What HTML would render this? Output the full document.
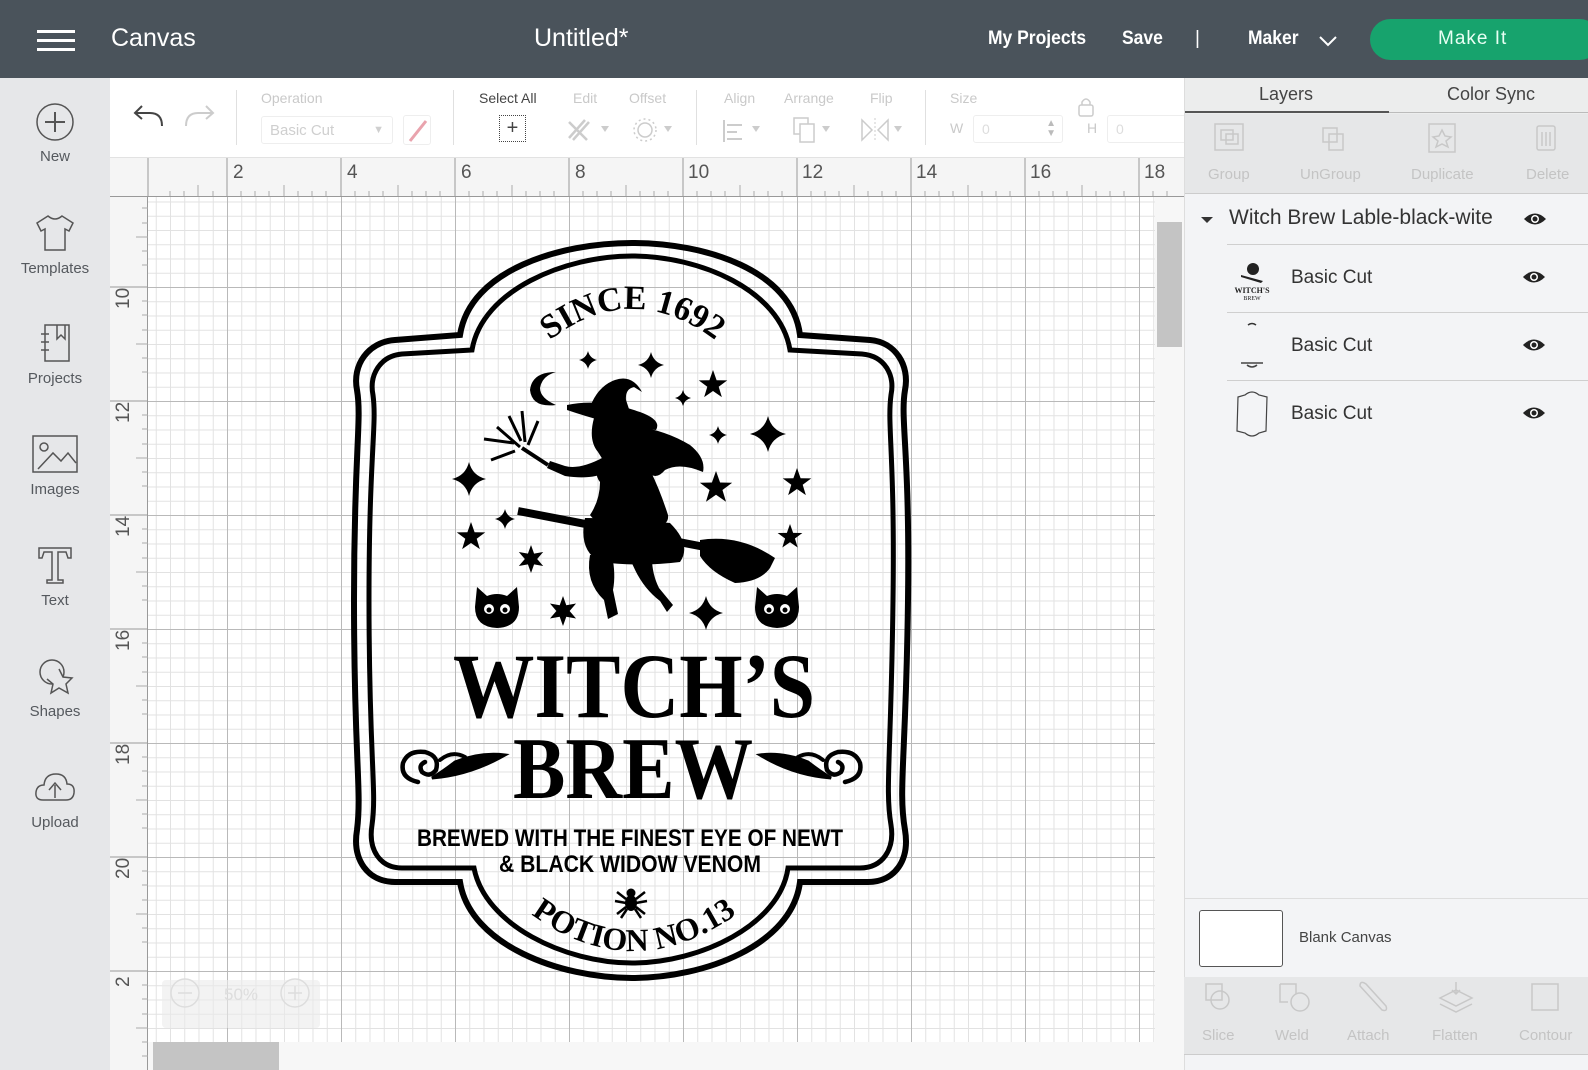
<!DOCTYPE html>
<html><head><meta charset="utf-8">
<style>
*{margin:0;padding:0;box-sizing:border-box}
body{width:1588px;height:1070px;overflow:hidden;position:relative;font-family:"Liberation Sans",sans-serif;background:#fff}
.abs{position:absolute}
#top{left:0;top:0;width:1588px;height:78px;background:#4a535b;color:#fff}
#side{left:0;top:78px;width:110px;height:992px;background:#e6e7e9}
.si{position:absolute;left:0;width:110px;text-align:center;color:#55595e;font-size:15px}
.si svg{display:block;margin:0 auto 6px}
#tb{left:110px;top:78px;width:1074px;height:80px;background:#fff;border-bottom:1px solid #e2e2e2}
.lab{position:absolute;font-size:14px;color:#c9c9c9}
#hr{left:110px;top:158px;width:1074px;height:39px;background:#f5f5f5}
#vr{left:110px;top:197px;width:38px;height:873px;background:#f5f5f5}
#grid{left:148px;top:197px;width:1007px;height:845px;background-color:#fff;
background-image:
linear-gradient(90deg,#b9b9b9 1px,transparent 1px),
linear-gradient(#b9b9b9 1px,transparent 1px),
linear-gradient(90deg,#e2e2e2 1px,transparent 1px),
linear-gradient(#e2e2e2 1px,transparent 1px);
background-size:114px 114px,114px 114px,14.25px 14.25px,14.25px 14.25px;
background-position:79px 0,0 90px,79px 0,0 90px}
#rp{left:1184px;top:78px;width:404px;height:992px;background:#f3f4f6;border-left:1px solid #ddd}
.lrow{position:absolute;left:1227px;width:361px;height:68px;border-top:1px solid #cfcfcf}
.lrow span{position:absolute;left:64px;top:22px;font-size:19px;color:#333}
.eye{position:absolute;left:295px;top:24px}
.bt{position:absolute;font-size:15px;color:#c4c4c4;text-align:center}
</style></head><body>

<div id="top" class="abs">
 <div class="abs" style="left:37px;top:30px;width:38px;height:3px;background:#fff;box-shadow:0 9px 0 #fff,0 18px 0 #fff"></div>
 <div class="abs" style="left:111px;top:24px;font-size:25px">Canvas</div>
 <div class="abs" style="left:534px;top:24px;font-size:25px">Untitled*</div>
 <div class="abs" style="left:988px;top:28px;font-size:19px;font-weight:bold;transform:scaleX(.92);transform-origin:left">My Projects</div>
 <div class="abs" style="left:1122px;top:28px;font-size:19px;font-weight:bold;transform:scaleX(.92);transform-origin:left">Save</div>
 <div class="abs" style="left:1195px;top:28px;font-size:19px">|</div>
 <div class="abs" style="left:1248px;top:28px;font-size:19px;font-weight:bold;transform:scaleX(.92);transform-origin:left">Maker</div>
 <svg class="abs" style="left:1318px;top:34px" width="20" height="14"><path d="M2 3 L10 11 L18 3" stroke="#fff" stroke-width="2" fill="none"/></svg>
 <div class="abs" style="left:1370px;top:19px;width:230px;height:41px;border-radius:21px;background:#17a36d;color:#e8fff4;font-size:19px;padding:9px 0 0 68px;letter-spacing:1px">Make It</div>
</div>

<div id="side" class="abs">
 <div class="si" style="top:24px"><svg width="40" height="40"><circle cx="20" cy="20" r="18" stroke="#555" stroke-width="1.5" fill="none"/><path d="M20 10V30M10 20H30" stroke="#555" stroke-width="2"/></svg>New</div>
 <div class="si" style="top:134px"><svg width="44" height="42"><path d="M15 4 L4 11 L8 19 L12 17 L12 38 L32 38 L32 17 L36 19 L40 11 L29 4 Q22 10 15 4Z" stroke="#555" stroke-width="1.5" fill="none"/></svg>Templates</div>
 <div class="si" style="top:244px"><svg width="40" height="42"><rect x="10" y="3" width="24" height="36" stroke="#555" stroke-width="1.5" fill="none"/><path d="M22 3V17L26 13L30 17V3M6 12H14M6 20H14M6 28H14" stroke="#555" stroke-width="1.5" fill="none"/></svg>Projects</div>
 <div class="si" style="top:355px"><svg width="48" height="42"><rect x="2" y="3" width="44" height="36" stroke="#555" stroke-width="1.5" fill="none"/><circle cx="13" cy="14" r="4" stroke="#555" stroke-width="1.5" fill="none"/><path d="M7 36L22 20L30 28L37 20L45 30" stroke="#555" stroke-width="1.5" fill="none"/></svg>Images</div>
 <div class="si" style="top:466px"><svg width="40" height="42"><path d="M4 4H36V14L33 14L31 8H23V36H28V39H12V36H17V8H9L7 14L4 14Z" stroke="#555" stroke-width="1.5" fill="none"/></svg>Text</div>
 <div class="si" style="top:577px"><svg width="40" height="42"><circle cx="17" cy="17" r="12" stroke="#555" stroke-width="1.5" fill="none"/><path d="M24 14L28 22L37 23L31 29L33 38L24 33L16 38L18 29L12 24" stroke="#555" stroke-width="1.5" fill="#e6e7e9"/></svg>Shapes</div>
 <div class="si" style="top:688px"><svg width="44" height="42"><path d="M10 34Q2 34 3 26Q4 19 11 19Q12 8 23 8Q33 8 34 18Q42 18 41 27Q40 34 33 34Z" stroke="#555" stroke-width="1.5" fill="none"/><path d="M22 32V19M16 24L22 17L28 24" stroke="#555" stroke-width="1.5" fill="none"/></svg>Upload</div>
</div>

<div id="tb" class="abs">
 <svg class="abs" style="left:22px;top:24px" width="36" height="28"><path d="M10 4L3 11L10 17M3 11H18Q30 11 30 24" stroke="#444" stroke-width="2" fill="none"/></svg>
 <svg class="abs" style="left:72px;top:24px" width="36" height="28"><path d="M24 4L31 11L24 17M31 11H16Q4 11 4 24" stroke="#ccc" stroke-width="2" fill="none"/></svg>
 <div class="abs" style="left:126px;top:12px;width:1px;height:55px;background:#e0e0e0"></div>
 <div class="lab" style="left:151px;top:12px">Operation</div>
 <div class="abs" style="left:151px;top:38px;width:132px;height:28px;border:1px solid #eee;border-radius:3px;font-size:15px;color:#cfcfcf;padding:5px 0 0 8px">Basic Cut<span style="position:absolute;right:8px;font-size:11px;top:7px">▼</span></div>
 <div class="abs" style="left:293px;top:37px;width:28px;height:30px;border:1px solid #eee;border-radius:3px"><svg width="28" height="30"><path d="M6 25L22 5" stroke="#e9a3ad" stroke-width="3"/></svg></div>
 <div class="abs" style="left:343px;top:12px;width:1px;height:55px;background:#e0e0e0"></div>
 <div class="lab" style="left:369px;top:12px;color:#444">Select All</div>
 <div class="abs" style="left:389px;top:37px;width:27px;height:27px;border:1.5px dotted #444;text-align:center;font-size:20px;line-height:24px;color:#444">+</div>
 <div class="lab" style="left:463px;top:12px">Edit</div>
 <svg class="abs" style="left:455px;top:38px" width="46" height="28"><path d="M4 22L20 4M8 24L24 6M4 6L22 24" stroke="#ccc" stroke-width="2.5" fill="none"/><path d="M36 10L40 16L44 10Z" fill="#ccc"/></svg>
 <div class="lab" style="left:519px;top:12px">Offset</div>
 <svg class="abs" style="left:522px;top:38px" width="46" height="28"><circle cx="13" cy="14" r="7" stroke="#ccc" stroke-width="1.5" fill="none"/><circle cx="13" cy="14" r="11" stroke="#ccc" stroke-width="1.5" stroke-dasharray="2 3" fill="none"/><path d="M32 10L36 16L40 10Z" fill="#ccc"/></svg>
 <div class="abs" style="left:586px;top:12px;width:1px;height:55px;background:#e0e0e0"></div>
 <div class="lab" style="left:614px;top:12px">Align</div>
 <svg class="abs" style="left:612px;top:40px" width="42" height="26"><path d="M2 2V24M5 7H20M5 14H15M5 21H20" stroke="#ccc" stroke-width="2"/><path d="M30 8L34 14L38 8Z" fill="#ccc"/></svg>
 <div class="lab" style="left:674px;top:12px">Arrange</div>
 <svg class="abs" style="left:680px;top:36px" width="46" height="32"><rect x="4" y="4" width="14" height="16" stroke="#ccc" stroke-width="1.5" fill="none"/><rect x="10" y="10" width="14" height="18" stroke="#ccc" stroke-width="1.5" fill="#fff"/><path d="M32 12L36 18L40 12Z" fill="#ccc"/></svg>
 <div class="lab" style="left:760px;top:12px">Flip</div>
 <svg class="abs" style="left:750px;top:38px" width="46" height="28"><path d="M2 4V24L12 14ZM28 4V24L18 14Z" stroke="#ccc" stroke-width="1.5" fill="none"/><path d="M15 2V26" stroke="#ccc" stroke-dasharray="2 2"/><path d="M34 10L38 16L42 10Z" fill="#ccc"/></svg>
 <div class="abs" style="left:815px;top:12px;width:1px;height:55px;background:#e0e0e0"></div>
 <div class="lab" style="left:840px;top:12px">Size</div>
 <div class="lab" style="left:840px;top:42px">W</div>
 <div class="abs" style="left:863px;top:37px;width:90px;height:28px;border:1px solid #eee;border-radius:3px;font-size:14px;color:#ddd;padding:5px 8px">0<span style="position:absolute;right:6px;top:3px;font-size:10px;line-height:10px;color:#bbb">▲<br>▼</span></div>
 <svg class="abs" style="left:966px;top:18px" width="20" height="22"><rect x="3" y="9" width="14" height="11" rx="2" stroke="#ccc" stroke-width="1.5" fill="none"/><path d="M6 9V6Q10 0 14 6V9" stroke="#ccc" stroke-width="1.5" fill="none"/></svg>
 <div class="lab" style="left:977px;top:42px">H</div>
 <div class="abs" style="left:997px;top:37px;width:80px;height:28px;border:1px solid #eee;border-radius:3px;font-size:14px;color:#ddd;padding:5px 8px">0</div>
</div>

<div id="hr" class="abs">
<svg width="1074" height="39" style="position:absolute;left:0;top:0">
<g stroke="#999" stroke-width="1">
<path d="M38 39V0"/>
<path d="M117 39V0M231 39V0M345 39V0M459 39V0M573 39V0M687 39V0M801 39V0M915 39V0M1029 39V0"/>
</g>
<g stroke="#aaa">
<path d="M60 39V33M74 39V33M88 39V27M103 39V33M131 39V33M145 39V33M159 39V33M174 39V27M188 39V33M202 39V33M216 39V33M245 39V33M259 39V33M273 39V33M288 39V27M302 39V33M316 39V33M330 39V33M359 39V33M373 39V33M387 39V33M402 39V27M416 39V33M430 39V33M444 39V33M473 39V33M487 39V33M501 39V33M516 39V27M530 39V33M544 39V33M558 39V33M587 39V33M601 39V33M615 39V33M630 39V27M644 39V33M658 39V33M672 39V33M701 39V33M715 39V33M729 39V33M744 39V27M758 39V33M772 39V33M786 39V33M815 39V33M829 39V33M843 39V33M858 39V27M872 39V33M886 39V33M900 39V33M929 39V33M943 39V33M957 39V33M972 39V27M986 39V33M1000 39V33M1014 39V33M1043 39V33M1057 39V33"/>
</g>
<g font-family="Liberation Sans" font-size="19" fill="#555">
<text x="123" y="20">2</text><text x="237" y="20">4</text><text x="351" y="20">6</text><text x="465" y="20">8</text><text x="578" y="20">10</text><text x="692" y="20">12</text><text x="806" y="20">14</text><text x="920" y="20">16</text><text x="1034" y="20">18</text>
</g>
<path d="M0 38.5H1074" stroke="#999"/>
</svg>
</div>
<div id="vr" class="abs">
<svg width="38" height="873" style="position:absolute;left:0;top:0">
<path d="M37.5 0V873" stroke="#999"/>
<g stroke="#999"><path d="M0 90H38M0 204H38M0 318H38M0 432H38M0 546H38M0 660H38M0 774H38"/></g>
<g stroke="#aaa"><path d="M32 11H38M32 26H38M26 40H38M32 54H38M32 68H38M32 104H38M32 118H38M32 133H38M26 147H38M32 161H38M32 175H38M32 218H38M32 232H38M32 247H38M26 261H38M32 275H38M32 289H38M32 332H38M32 346H38M32 361H38M26 375H38M32 389H38M32 403H38M32 446H38M32 460H38M32 475H38M26 489H38M32 503H38M32 517H38M32 560H38M32 574H38M32 589H38M26 603H38M32 617H38M32 631H38M32 674H38M32 688H38M32 703H38M26 717H38M32 731H38M32 745H38M32 788H38M32 802H38M32 817H38M26 831H38M32 845H38M32 859H38"/></g>
<g font-family="Liberation Sans" font-size="19" fill="#555">
<text transform="translate(19,112) rotate(-90)">10</text><text transform="translate(19,226) rotate(-90)">12</text><text transform="translate(19,340) rotate(-90)">14</text><text transform="translate(19,454) rotate(-90)">16</text><text transform="translate(19,568) rotate(-90)">18</text><text transform="translate(19,682) rotate(-90)">20</text><text transform="translate(19,790) rotate(-90)">2</text>
</g>
</svg>
</div>

<div id="grid" class="abs"></div>
<div class="abs" style="left:1155px;top:197px;width:29px;height:873px;background:#f7f7f7"></div>
<div class="abs" style="left:1157px;top:222px;width:25px;height:125px;background:#c4c4c4"></div>
<div class="abs" style="left:148px;top:1042px;width:1007px;height:28px;background:#f7f7f7"></div>
<div class="abs" style="left:153px;top:1042px;width:126px;height:28px;background:#c4c4c4"></div>
<div class="abs" style="left:162px;top:980px;width:158px;height:48px;background:rgba(235,235,235,.6);border-radius:4px"></div>
<svg class="abs" style="left:168px;top:978px" width="150" height="32"><circle cx="17" cy="15" r="14" stroke="#ddd" stroke-width="1.5" fill="none"/><path d="M10 15H24" stroke="#ddd" stroke-width="1.5"/><circle cx="127" cy="15" r="14" stroke="#ddd" stroke-width="1.5" fill="none"/><path d="M120 15H134M127 8V22" stroke="#ddd" stroke-width="1.5"/><text x="56" y="22" font-family="Liberation Sans" font-size="17" fill="#ddd">50%</text></svg>

<svg class="abs" style="left:0;top:0" width="1155" height="1042" viewBox="0 0 1155 1042">
<defs>
<path id="s4" d="M0,-10 Q2,-2 10,0 Q2,2 0,10 Q-2,2 -10,0 Q-2,-2 0,-10Z"/>
<polygon id="s5" points="0,-10 2.4,-3.2 9.5,-3.1 3.8,1.2 5.9,8.1 0,4 -5.9,8.1 -3.8,1.2 -9.5,-3.1 -2.4,-3.2"/>
<polygon id="s6" points="0,-10 2.2,-3.8 8.7,-5 4.4,0 8.7,5 2.2,3.8 0,10 -2.2,3.8 -8.7,5 -4.4,0 -8.7,-5 -2.2,-3.8"/>
<g id="cat"><path d="M-20,-20 L-10,-11 Q0,-15 10,-11 L20,-20 L22,0 Q22,20 0,21 Q-22,20 -22,0Z" fill="#000"/><circle cx="-8" cy="2" r="5" fill="#fff"/><circle cx="8" cy="2" r="5" fill="#fff"/><circle cx="-8" cy="3" r="2.5" fill="#000"/><circle cx="8" cy="3" r="2.5" fill="#000"/></g>
<path id="arcTop" d="M540,348 Q632,270 725,348"/>
<path id="arcBot" d="M528,912 Q632,990 740,912"/>
</defs>
<path d="M460,335 C470,270 560,243 632,243 C705,243 792,270 800,335 L870,340 C895,342 910,365 905,390 C900,420 910,450 908,600 C906,760 898,790 905,830 C910,860 895,882 868,882 L800,882 C792,945 705,978 632,978 C560,978 470,945 460,882 L395,882 C368,882 352,860 357,830 C362,790 354,760 354,600 C354,450 362,420 357,390 C352,365 368,342 395,340 Z" stroke="#000" stroke-width="6" fill="none"/>
<path d="M472,350 C482,290 565,256 632,256 C700,256 780,290 790,350 L862,354 C885,356 895,375 891,395 C887,425 895,455 893,600 C891,760 885,790 891,825 C895,850 882,868 860,868 L788,868 C780,925 700,963 632,963 C565,963 485,925 474,868 L402,868 C380,868 368,850 372,825 C377,790 369,760 369,600 C369,455 377,425 373,395 C369,375 380,356 402,354 Z" stroke="#000" stroke-width="5" fill="none"/>
<text font-family="Liberation Serif" font-weight="bold" font-size="34" fill="#000"><textPath href="#arcTop" startOffset="50%" text-anchor="middle">SINCE 1692</textPath></text>
<text font-family="Liberation Serif" font-weight="bold" font-size="32" fill="#000"><textPath href="#arcBot" startOffset="50%" text-anchor="middle">POTION NO.13</textPath></text>
<g transform="translate(631,903)"><ellipse rx="6" ry="8" fill="#000"/><circle cy="-10" r="4.5" fill="#000"/><path d="M-5,-4 L-14,-11 M-5,0 L-16,-2 M-5,4 L-14,11 M-4,6 L-10,15 M5,-4 L14,-11 M5,0 L16,-2 M5,4 L14,11 M4,6 L10,15" stroke="#000" stroke-width="2.5"/></g>
<g fill="#000">
<use href="#s4" transform="translate(588,360) scale(.9)"/>
<use href="#s4" transform="translate(651,365) scale(1.3)"/>
<use href="#s5" transform="translate(713,385) scale(1.5)"/>
<use href="#s4" transform="translate(683,398) scale(.8)"/>
<use href="#s4" transform="translate(718,435) scale(.9)"/>
<use href="#s4" transform="translate(768,434) scale(1.8)"/>
<use href="#s4" transform="translate(469,479) scale(1.7)"/>
<use href="#s5" transform="translate(716,488) scale(1.7)"/>
<use href="#s5" transform="translate(797,483) scale(1.5)"/>
<use href="#s4" transform="translate(505,519) scale(1)"/>
<use href="#s5" transform="translate(471,537) scale(1.5)"/>
<use href="#s5" transform="translate(790,537) scale(1.3)"/>
<use href="#s6" transform="translate(531,559) scale(1.4)"/>
<use href="#s6" transform="translate(563,611) scale(1.5)"/>
<use href="#s4" transform="translate(706,613) scale(1.7)"/>
<use href="#cat" transform="translate(497,607)"/>
<use href="#cat" transform="translate(777,607)"/>
<path d="M556,372 Q532,372 530,390 Q532,408 556,405 Q540,398 540,388 Q542,376 556,372Z"/>
<!-- witch -->
<path d="M567,405 Q600,398 640,412 Q662,420 656,430 Q620,428 567,410Z"/>
<path d="M590,407 Q598,386 615,380 Q632,374 642,392 L634,387 Q625,389 626,400 L632,418Z"/>
<path d="M594,418 Q588,440 598,452 L603,460 Q592,472 600,482 Q600,500 590,515 Q600,530 640,525 Q670,530 668,515 Q660,490 650,470 Q640,450 632,430 Q620,418 594,418Z"/>
<path d="M625,425 Q662,428 690,445 Q706,458 703,472 Q680,462 665,470 Q655,482 646,470Z"/>
<path d="M604,457 Q580,470 565,466 L550,461 L547,468 L565,476 Q592,480 607,472Z"/>
<path d="M585,518 Q620,518 670,523 Q692,545 680,562 Q640,567 600,562 Q578,550 585,518Z"/>
<path d="M518,511 L710,548" stroke="#000" stroke-width="8"/>
<path d="M700,540 Q740,534 775,558 L770,568 Q760,582 735,583 Q710,572 700,556Z"/>
<path d="M590,555 Q585,582 604,600 L608,619 L618,614 L613,590 Q616,574 612,556Z"/>
<path d="M630,558 Q640,586 660,601 L667,612 L673,605 L659,588 Q652,574 652,558Z"/>
<path d="M548,465 L522,448" stroke="#000" stroke-width="4"/>
<path d="M520,447 L497,427 M514,443 L484,439 M515,451 L491,460 M521,441 L509,416 M525,442 L522,411 M528,445 L538,421" stroke="#000" stroke-width="3"/>
</g>
<g stroke="#000" fill="none" stroke-linecap="round">
<path d="M418,782 Q400,778 403,763 Q408,750 425,752 Q440,756 436,770 Q430,778 422,772 Q418,765 425,762" stroke-width="4.5"/>
<path d="M440,760 Q452,750 465,757 Q470,766 460,770" stroke-width="4"/>
<path d="M432,778 Q470,775 505,755 Q480,752 455,762 Q445,770 432,778Z" stroke-width="3" fill="#000"/>
<path d="M845,782 Q863,778 860,763 Q855,750 838,752 Q823,756 827,770 Q833,778 841,772 Q845,765 838,762" stroke-width="4.5"/>
<path d="M823,760 Q811,750 798,757 Q793,766 803,770" stroke-width="4"/>
<path d="M831,778 Q793,775 760,755 Q783,752 808,762 Q818,770 831,778Z" stroke-width="3" fill="#000"/>
</g>
<text x="634" y="717" text-anchor="middle" font-family="Liberation Serif" font-weight="bold" font-size="92" fill="#000" textLength="362" lengthAdjust="spacingAndGlyphs">WITCH’S</text>
<text x="633" y="798" text-anchor="middle" font-family="Liberation Serif" font-weight="bold" font-size="88" fill="#000" textLength="240" lengthAdjust="spacingAndGlyphs">BREW</text>
<text x="630" y="846" text-anchor="middle" font-family="Liberation Sans" font-weight="bold" font-size="24" fill="#000" textLength="426" lengthAdjust="spacingAndGlyphs">BREWED WITH THE FINEST EYE OF NEWT</text>
<text x="630" y="872" text-anchor="middle" font-family="Liberation Sans" font-weight="bold" font-size="24" fill="#000" textLength="262" lengthAdjust="spacingAndGlyphs">&amp; BLACK WIDOW VENOM</text>
</svg>

<div id="rp" class="abs">
 <div class="abs" style="left:0;top:0;width:404px;height:36px;background:#eceded"></div>
 <div class="abs" style="left:74px;top:6px;font-size:18px;color:#444">Layers</div>
 <div class="abs" style="left:262px;top:6px;font-size:18px;color:#444">Color Sync</div>
 <div class="abs" style="left:0;top:33px;width:204px;height:2px;background:#555"></div>
 <div class="abs" style="left:204px;top:34px;width:200px;height:1px;background:#bbb"></div>
 <div class="abs" style="left:0;top:36px;width:404px;height:80px;background:#e6e7e8;border-bottom:1px solid #ccc"></div>
 <svg class="abs" style="left:28px;top:44px" width="376" height="32"><g stroke="#c8c8c8" stroke-width="1.5" fill="none"><rect x="2" y="2" width="28" height="26"/><rect x="8" y="8" width="12" height="10"/><rect x="13" y="12" width="12" height="10"/><rect x="110" y="6" width="14" height="14"/><rect x="116" y="12" width="14" height="16"/><rect x="216" y="2" width="26" height="28"/><path d="M229 8L232 14L238 15L233 19L235 25L229 22L223 25L225 19L220 15L226 14Z"/><rect x="324" y="4" width="18" height="24" rx="2"/><path d="M329 10V24M333 10V24M337 10V24"/></g></svg>
 <div class="bt" style="left:23px;top:88px">Group</div>
 <div class="bt" style="left:115px;top:88px">UnGroup</div>
 <div class="bt" style="left:226px;top:88px">Duplicate</div>
 <div class="bt" style="left:341px;top:88px">Delete</div>
 <svg class="abs" style="left:15px;top:137px" width="14" height="10"><path d="M1 2H13L7 8Z" fill="#333"/></svg>
 <div class="abs" style="left:44px;top:128px;font-size:21px;color:#333">Witch Brew Lable-black-wite</div>
 <svg class="abs" style="left:338px;top:133px" width="24" height="16"><path d="M1 8Q12 -3 23 8Q12 19 1 8Z" fill="#222"/><circle cx="12" cy="8" r="4" fill="#fff"/><circle cx="12" cy="8" r="2.5" fill="#222"/></svg>
</div>
<div class="lrow" style="top:244px"><svg class="abs" style="left:4px;top:10px" width="42" height="46"><g fill="#222"><circle cx="22" cy="14" r="6"/><path d="M10 20L32 26L30 28L10 22Z"/><text x="21" y="38" font-family="Liberation Serif" font-weight="bold" font-size="8" text-anchor="middle">WITCH'S</text><text x="21" y="45" font-family="Liberation Serif" font-size="6" text-anchor="middle">BREW</text></g></svg><span>Basic Cut</span><svg class="eye" width="24" height="16"><path d="M1 8Q12 -3 23 8Q12 19 1 8Z" fill="#222"/><circle cx="12" cy="8" r="4" fill="#fff"/><circle cx="12" cy="8" r="2.5" fill="#222"/></svg></div>
<div class="lrow" style="top:312px"><svg class="abs" style="left:4px;top:8px" width="42" height="50"><path d="M17 4Q21 1 25 4" stroke="#333" stroke-width="1.5" fill="none"/><path d="M10 42H32M16 44Q21 48 26 44" stroke="#444" stroke-width="1.5" fill="none"/></svg><span>Basic Cut</span><svg class="eye" width="24" height="16"><path d="M1 8Q12 -3 23 8Q12 19 1 8Z" fill="#222"/><circle cx="12" cy="8" r="4" fill="#fff"/><circle cx="12" cy="8" r="2.5" fill="#222"/></svg></div>
<div class="lrow" style="top:380px"><svg class="abs" style="left:4px;top:8px" width="42" height="50"><path d="M14 6Q21 0 28 6L36 8L35 42L28 44Q21 50 14 44L6 42L7 8Z" stroke="#444" stroke-width="1.2" fill="none"/></svg><span>Basic Cut</span><svg class="eye" width="24" height="16"><path d="M1 8Q12 -3 23 8Q12 19 1 8Z" fill="#222"/><circle cx="12" cy="8" r="4" fill="#fff"/><circle cx="12" cy="8" r="2.5" fill="#222"/></svg></div>
<div class="abs" style="left:1184px;top:898px;width:404px;height:1px;background:#ddd"></div>
<div class="abs" style="left:1199px;top:910px;width:84px;height:57px;background:#fff;border:1.5px solid #555;border-radius:3px"></div>
<div class="abs" style="left:1299px;top:929px;font-size:15px;color:#444">Blank Canvas</div>
<div class="abs" style="left:1184px;top:977px;width:404px;height:78px;background:#e6e7e8;border-bottom:1px solid #ccc"></div>
<svg class="abs" style="left:1200px;top:980px" width="388" height="36"><g stroke="#c8c8c8" stroke-width="1.5" fill="none"><rect x="6" y="4" width="16" height="16"/><circle cx="20" cy="20" r="9"/><path d="M80 4H96V14M80 4V22H88"/><circle cx="100" cy="22" r="9"/><path d="M160 6L182 30Q188 32 186 26L166 4Q160 0 160 6Z"/><path d="M240 18L256 10L272 18L256 26Z"/><path d="M240 24L256 32L272 24M256 2V14M252 10L256 14L260 10"/><rect x="332" y="4" width="26" height="26"/></g></svg>
<div class="bt" style="left:1202px;top:1027px">Slice</div>
<div class="bt" style="left:1275px;top:1027px">Weld</div>
<div class="bt" style="left:1347px;top:1027px">Attach</div>
<div class="bt" style="left:1432px;top:1027px">Flatten</div>
<div class="bt" style="left:1519px;top:1027px">Contour</div>
</body></html>
